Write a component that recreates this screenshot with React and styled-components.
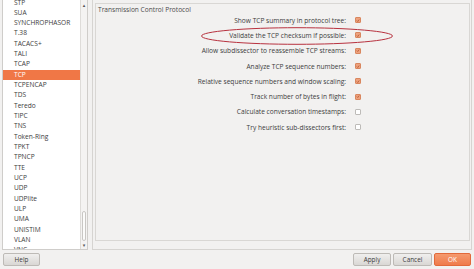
import React from 'react';
import styled, { createGlobalStyle } from 'styled-components';

const GlobalStyle = createGlobalStyle`
  html, body {
    margin: 0;
    padding: 0;
    background: #f2f1f0;
  }
  body {
    font-family: "Open Sans", "DejaVu Sans", sans-serif;
    color: #3c3c3c;
  }
`;

const Window = styled.div`
  width: 474px;
  height: 269px;
  overflow: hidden;
  display: flex;
  flex-direction: column;
  background: #f2f1f0;
`;

const Body = styled.div`
  display: flex;
  height: 250px;
  gap: 4px;
`;

const ListPane = styled.div`
  width: 84px;
  margin-left: 2px;
  margin-top: -1px;
  display: flex;
  background: #fff;
  border: 1px solid #cfcdca;
`;

const List = styled.div`
  flex: 1;
  overflow: hidden;
  padding-top: 1px;
`;

const ListInner = styled.div`
  margin-top: -3.5px;
`;

const Item = styled.div`
  height: 10.33px;
  line-height: 10.33px;
  font-size: 6.6px;
  padding-left: 11px;
  margin-left: 0;
  white-space: nowrap;
  background: ${p => (p.$selected ? '#f07746' : 'transparent')};
  color: ${p => (p.$selected ? '#fff' : '#3c3c3c')};
`;

const Scrollbar = styled.div`
  width: 6px;
  position: relative;
  background: #f4f3f2;
  border-left: 1px solid #dedcd9;
`;

const Arrow = styled.div`
  position: absolute;
  left: 0;
  width: 6px;
  text-align: center;
  font-size: 5px;
  line-height: 5px;
  color: #555;
  top: ${p => p.$top}px;
`;

const Thumb = styled.div`
  position: absolute;
  left: 1px;
  width: 4px;
  top: 211px;
  height: 30px;
  border-radius: 2px;
  background: #fbfbfa;
  border: 1px solid #c9c7c4;
  box-sizing: border-box;
`;

const PageFrame = styled.div`
  flex: 1;
  margin-right: 2px;
  margin-top: -1px;
  border: 1px solid #d6d4d1;
  padding: 3px 1px 8px 2px;
  display: flex;
`;

const GroupBox = styled.div`
  flex: 1;
  position: relative;
  border: 1px solid #d9d7d4;
  box-sizing: border-box;
`;

const GroupLabel = styled.div`
  font-size: 6.6px;
  line-height: 9px;
  padding: 0.5px 0 0 2px;
  color: #4a4a4a;
`;

const Rows = styled.div`
  margin-top: -1px;
  width: 265px;
  display: grid;
  grid-template-columns: 1fr 6px;
  column-gap: 9px;
  grid-auto-rows: 15.3px;
  align-items: center;
`;

const RowLabel = styled.div`
  font-size: 6.6px;
  text-align: right;
  white-space: nowrap;
  color: #3c3c3c;
`;

const Check = styled.div`
  width: 6px;
  height: 6px;
  box-sizing: border-box;
  border-radius: 1px;
  border: 1px solid ${p => (p.$on ? '#d9875f' : '#bdbbb8')};
  background: ${p => (p.$on ? '#eda27e' : '#ffffff')};
  display: flex;
  align-items: center;
  justify-content: center;
`;

const Ellipse = styled.svg`
  position: absolute;
  left: 105px;
  top: 23px;
  overflow: visible;
`;

const Footer = styled.div`
  flex: 1;
  display: flex;
  align-items: flex-start;
  padding: 3px 3px 0 3px;
  gap: 2px;
`;

const Spacer = styled.div`
  flex: 1;
`;

const Button = styled.div`
  width: ${p => p.$w}px;
  height: 13px;
  box-sizing: border-box;
  border-radius: 2px;
  font-size: 6.4px;
  line-height: 11px;
  text-align: center;
  border: 1px solid ${p => (p.$primary ? '#e2693a' : '#bdbab6')};
  background: ${p =>
    p.$primary
      ? 'linear-gradient(#f59a6f, #ef7b4b)'
      : 'linear-gradient(#f0efee, #d9d7d4)'};
  color: ${p => (p.$primary ? '#fff' : '#3c3c3c')};
`;

const items = [
  'STP', 'SUA', 'SYNCHROPHASOR', 'T.38', 'TACACS+', 'TALI', 'TCAP', 'TCP',
  'TCPENCAP', 'TDS', 'Teredo', 'TIPC', 'TNS', 'Token-Ring', 'TPKT', 'TPNCP',
  'TTE', 'UCP', 'UDP', 'UDPlite', 'ULP', 'UMA', 'UNISTIM', 'VLAN', 'VNC',
];

const options = [
  ['Show TCP summary in protocol tree:', true],
  ['Validate the TCP checksum if possible:', true],
  ['Allow subdissector to reassemble TCP streams:', true],
  ['Analyze TCP sequence numbers:', true],
  ['Relative sequence numbers and window scaling:', true],
  ['Track number of bytes in flight:', true],
  ['Calculate conversation timestamps:', false],
  ['Try heuristic sub-dissectors first:', false],
];

function CheckMark() {
  return (
    <svg width="5" height="5" viewBox="0 0 10 10">
      <path d="M2 5 L4.3 7.5 L8 2.5" fill="none" stroke="#b24f2a" strokeWidth="1.8" />
    </svg>
  );
}

export default function App() {
  return (
    <Window>
      <GlobalStyle />
      <Body>
        <ListPane>
          <List>
            <ListInner>
              {items.map(name => (
                <Item key={name} $selected={name === 'TCP'}>{name}</Item>
              ))}
            </ListInner>
          </List>
          <Scrollbar>
            <Arrow $top={3}>▴</Arrow>
            <Thumb />
            <Arrow $top={243}>▾</Arrow>
          </Scrollbar>
        </ListPane>
        <PageFrame>
          <GroupBox>
            <GroupLabel>Transmission Control Protocol</GroupLabel>
            <Rows>
              {options.map(([label, on]) => (
                <React.Fragment key={label}>
                  <RowLabel>{label}</RowLabel>
                  <Check $on={on}>{on && <CheckMark />}</Check>
                </React.Fragment>
              ))}
            </Rows>
            <Ellipse width="192" height="18" viewBox="0 0 192 18">
              <ellipse cx="96" cy="9" rx="95.5" ry="8.3" fill="none" stroke="#b8323f" strokeWidth="1" />
            </Ellipse>
          </GroupBox>
        </PageFrame>
      </Body>
      <Footer>
        <Button $w={37}>Help</Button>
        <Spacer />
        <Button $w={38}>Apply</Button>
        <Button $w={39}>Cancel</Button>
        <Button $w={37} $primary>OK</Button>
      </Footer>
    </Window>
  );
}
